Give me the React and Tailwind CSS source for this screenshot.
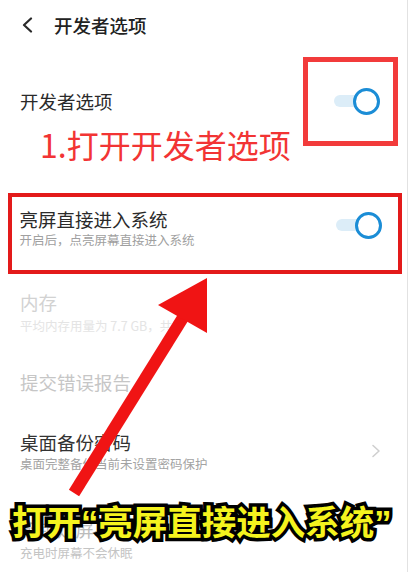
import React from "react";

function Toggle() {
  return (
    <div className="relative w-[46px] h-[27px] shrink-0">
      <div className="absolute left-0 top-[7.5px] w-[30px] h-[12px] rounded-full bg-[#dcedf8]" />
      <div className="absolute right-0 top-0 w-[27px] h-[27px] rounded-full border-[3.5px] border-[#1b8dd6] bg-white" />
    </div>
  );
}

export default function App() {
  return (
    <div className="relative w-[408px] h-[572px] overflow-hidden bg-white font-['Noto_Sans_CJK_SC',sans-serif] border-r border-[#e2e2e2]">
      {/* header */}
      <div className="flex items-center h-[49px]">
        <svg className="ml-[21px]" width="12" height="16" viewBox="0 0 12 16">
          <polyline points="10,1.5 3,8 10,14.5" fill="none" stroke="#2a2a2a" strokeWidth="2.2" strokeLinecap="round" strokeLinejoin="round" />
        </svg>
        <div className="ml-[21px] text-[18.5px] leading-[24px] font-medium text-[#222]">开发者选项</div>
      </div>

      {/* row 1 */}
      <div className="mt-[32px] h-[40px] flex items-center justify-between pl-5 pr-[27px]">
        <div className="text-[18.5px] leading-[24px] text-[#2a2a2a]">开发者选项</div>
        <Toggle />
      </div>

      {/* red annotation text */}
      <div className="mt-[5px] h-[36px] pl-[40px] text-[32px] leading-[36px] text-[#f23434]">1.打开开发者选项</div>

      {/* row 2 highlighted */}
      <div className="mt-[30.5px] ml-[8px] w-[394px] h-[81px] border-[4.5px] border-[#e31a1a] flex items-start pt-[10.5px] pl-[7.5px] pr-[16.5px]">
        <div className="flex-1 flex flex-col">
          <div className="text-[18.5px] leading-[24px] text-[#2a2a2a]">亮屏直接进入系统</div>
          <div className="text-[12.5px] leading-[18px] text-[#a0a0a0]">开启后，点亮屏幕直接进入系统</div>
        </div>
        <div className="mt-[4.5px]">
          <Toggle />
        </div>
      </div>

      {/* 内存 */}
      <div className="mt-[16px] pl-5 flex flex-col">
        <div className="text-[18.5px] leading-[24px] text-[#d2d2d2]">内存</div>
        <div className="mt-[3px] text-[12.5px] leading-[18px] text-[#e4e4e4]">平均内存用量为 7.7 GB，共</div>
      </div>

      {/* 提交错误报告 */}
      <div className="mt-[35px] pl-5 text-[18.5px] leading-[24px] text-[#c6c6c6]">提交错误报告</div>

      {/* 桌面备份密码 */}
      <div className="mt-[36px] pl-5 pr-[26px] flex items-center justify-between">
        <div className="flex flex-col">
          <div className="text-[18.5px] leading-[24px] text-[#333]">桌面备份密码</div>
          <div className="mt-[1px] text-[12.5px] leading-[18px] text-[#a3a3a3]">桌面完整备份当前未设置密码保护</div>
        </div>
        <svg width="10" height="14" viewBox="0 0 10 14">
          <polyline points="2,1.5 8,7 2,12.5" fill="none" stroke="#cfcfcf" strokeWidth="1.6" strokeLinecap="round" strokeLinejoin="round" />
        </svg>
      </div>

      {/* 不锁定屏幕 */}
      <div className="mt-[44px] pl-5 flex flex-col">
        <div className="text-[18.5px] leading-[24px] text-[#bbb]">不锁定屏幕</div>
        <div className="mt-[3px] text-[12.5px] leading-[18px] text-[#c4c4c4]">充电时屏幕不会休眠</div>
      </div>

      {/* annotation: box around first toggle */}
      <div className="absolute left-[303px] top-[57px] w-[95px] h-[89px] border-[5px] border-[#f23b3b]" />

      {/* annotation: arrow */}
      <svg className="absolute left-0 top-0" width="408" height="572" viewBox="0 0 408 572">
        <line x1="74" y1="493" x2="184" y2="316" stroke="#f01414" strokeWidth="12" />
        <polygon points="207,278 158,305 207,333" fill="#f01414" />
      </svg>

      {/* annotation: caption */}
      <div className="absolute left-[12px] top-[503px] text-[34.5px] leading-[40px] font-bold whitespace-nowrap text-[#f5f31e] font-['Liberation_Sans','Noto_Sans_CJK_SC',sans-serif] [-webkit-text-stroke:7px_#000] [paint-order:stroke_fill]">
        打开“亮屏直接进入系统”
      </div>
    </div>
  );
}
